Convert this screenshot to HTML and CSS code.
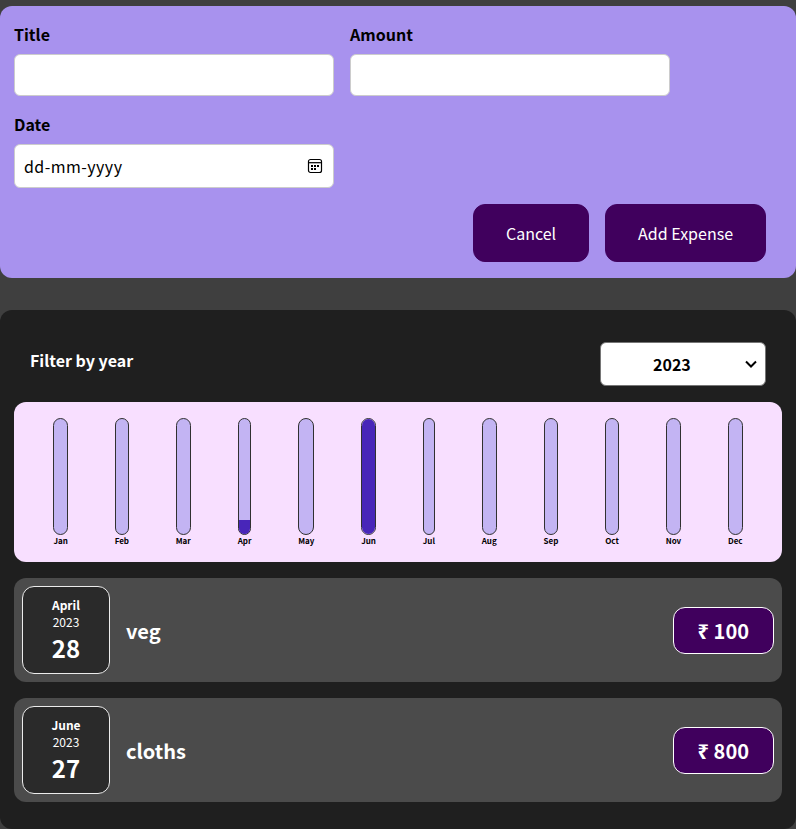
FILE: index.html
```html
<!DOCTYPE html>
<html lang="en">
<head>
    <meta charset="UTF-8">
    <meta name="viewport" content="width=device-width, initial-scale=1.0">
    <title>Expenses</title>
    <link rel="stylesheet" href="styles.css">
</head>
<body>
    <div class="new-expense">
        <form>
            <div class="new-expense-controls">
                <div class="new-expense-control">
                    <label for="title">Title</label>
                    <input id="title" class="text-input" type="text">
                </div>
                <div class="new-expense-control">
                    <label for="amount">Amount</label>
                    <input id="amount" class="text-input" type="text">
                </div>
                <div class="new-expense-control">
                    <label for="date">Date</label>
                    <div class="date-input">
                        <input id="date" type="text" placeholder="dd-mm-yyyy">
                        <svg class="date-icon" width="16" height="16" viewBox="0 0 16 16" aria-hidden="true">
                            <rect x="1.5" y="1.5" width="13" height="13" rx="2" fill="none" stroke="#000" stroke-width="1.2"/>
                            <path d="M1.5 4.7h13" stroke="#000" stroke-width="1.2"/>
                            <path d="M4 7h2v2H4zM7 7h2v2H7zM10 7h2v2h-2zM4 10h2v2H4zM7 10h2v2H7z" fill="#000"/>
                        </svg>
                    </div>
                </div>
            </div>
            <div class="new-expense-actions">
                <button type="button">Cancel</button>
                <button type="submit">Add Expense</button>
            </div>
        </form>
    </div>

    <div class="expenses">
        <div class="expenses-filter">
            <label for="year">Filter by year</label>
            <select id="year">
                <option>2023</option>
            </select>
        </div>

        <div class="chart">
            <div class="chart-bar"><div class="chart-bar-inner"></div><div class="chart-bar-label">Jan</div></div>
            <div class="chart-bar"><div class="chart-bar-inner"></div><div class="chart-bar-label">Feb</div></div>
            <div class="chart-bar"><div class="chart-bar-inner"></div><div class="chart-bar-label">Mar</div></div>
            <div class="chart-bar"><div class="chart-bar-inner"><div class="chart-bar-fill" style="height: 12.5%"></div></div><div class="chart-bar-label">Apr</div></div>
            <div class="chart-bar"><div class="chart-bar-inner"></div><div class="chart-bar-label">May</div></div>
            <div class="chart-bar"><div class="chart-bar-inner"><div class="chart-bar-fill" style="height: 100%"></div></div><div class="chart-bar-label">Jun</div></div>
            <div class="chart-bar"><div class="chart-bar-inner"></div><div class="chart-bar-label">Jul</div></div>
            <div class="chart-bar"><div class="chart-bar-inner"></div><div class="chart-bar-label">Aug</div></div>
            <div class="chart-bar"><div class="chart-bar-inner"></div><div class="chart-bar-label">Sep</div></div>
            <div class="chart-bar"><div class="chart-bar-inner"></div><div class="chart-bar-label">Oct</div></div>
            <div class="chart-bar"><div class="chart-bar-inner"></div><div class="chart-bar-label">Nov</div></div>
            <div class="chart-bar"><div class="chart-bar-inner"></div><div class="chart-bar-label">Dec</div></div>
        </div>

        <div class="expense-item">
            <div class="expense-date">
                <div class="expense-month">April</div>
                <div class="expense-year">2023</div>
                <div class="expense-day">28</div>
            </div>
            <h2 class="expense-title">veg</h2>
            <div class="expense-price">₹ 100</div>
        </div>

        <div class="expense-item">
            <div class="expense-date">
                <div class="expense-month">June</div>
                <div class="expense-year">2023</div>
                <div class="expense-day">27</div>
            </div>
            <h2 class="expense-title">cloths</h2>
            <div class="expense-price">₹ 800</div>
        </div>
    </div>
</body>
</html>
```

FILE: styles.css
```css
* {
    box-sizing: border-box;
}

html {
    font-family: "Noto Sans CJK JP", "Noto Sans", sans-serif;
}

body {
    display: flex;
    flex-direction: column;
    margin: 0;
    padding-top: 6px;
    height: 100vh;
    background-color: #3f3f3f;
}

.new-expense {
    background-color: #a892ee;
    padding: 16px 14px;
    border-radius: 12px;
    margin-bottom: 32px;
}

.new-expense-controls {
    display: flex;
    flex-wrap: wrap;
    gap: 16px;
    margin-bottom: 16px;
}

.new-expense-control label {
    display: block;
    font-weight: bold;
    margin-bottom: 8px;
}

.text-input {
    display: block;
    font: inherit;
    width: 320px;
    height: 42px;
    padding: 8px;
    border: 1px solid #ccc;
    border-radius: 6px;
}

.date-input {
    display: flex;
    align-items: center;
    width: 320px;
    height: 44px;
    padding: 0 10px 0 9px;
    background: #fff;
    border: 1px solid #ccc;
    border-radius: 6px;
}

.date-input input {
    flex: 1;
    min-width: 0;
    font: inherit;
    letter-spacing: 0.45px;
    padding: 0;
    border: none;
    outline: none;
}

.date-input input::placeholder {
    color: #000;
    opacity: 1;
}

.date-icon {
    flex-shrink: 0;
}

.new-expense-actions {
    display: flex;
    justify-content: flex-end;
    gap: 16px;
    padding-right: 16px;
}

.new-expense-actions button {
    font: inherit;
    padding: 16px 32px;
    border: 1px solid #40005d;
    background-color: #40005d;
    color: #fff;
    border-radius: 12px;
    cursor: pointer;
}

.expenses {
    flex: 1;
    min-height: 0;
    background-color: #1f1f1f;
    padding: 16px 14px 0;
    border-radius: 12px;
}

.expenses-filter {
    display: flex;
    justify-content: space-between;
    align-items: center;
    margin: 16px 0;
    padding: 0 16px;
    color: #fff;
}

.expenses-filter label {
    font-weight: bold;
    margin-bottom: 8px;
}

.expenses-filter select {
    appearance: none;
    font: inherit;
    font-weight: bold;
    width: 166px;
    height: 44px;
    padding: 8px 52px;
    background-color: #fff;
    background-image: url("data:image/svg+xml,%3Csvg xmlns='http://www.w3.org/2000/svg' width='14' height='10' viewBox='0 0 14 10'%3E%3Cpath d='M2 2.5l5 5 5-5' fill='none' stroke='%23000' stroke-width='2'/%3E%3C/svg%3E");
    background-repeat: no-repeat;
    background-position: right 7px center;
    border: 1px solid #767676;
    border-radius: 6px;
}

.chart {
    display: flex;
    justify-content: space-around;
    height: 160px;
    padding: 16px;
    border-radius: 12px;
    background-color: #f8dfff;
}

.chart-bar {
    display: flex;
    flex-direction: column;
    align-items: center;
    height: 100%;
}

.chart-bar-inner {
    flex: 1;
    display: flex;
    flex-direction: column;
    justify-content: flex-end;
    width: 100%;
    border: 1px solid #313131;
    border-radius: 12px;
    background-color: #c3b4f3;
    overflow: hidden;
}

.chart-bar-fill {
    background-color: #4826b9;
}

.chart-bar-label {
    font-weight: bold;
    font-size: 8px;
    text-align: center;
}

.expense-item {
    display: flex;
    align-items: center;
    padding: 8px;
    margin: 16px 0;
    border-radius: 12px;
    background-color: #4b4b4b;
}

.expense-date {
    display: flex;
    flex-direction: column;
    align-items: center;
    justify-content: center;
    width: 88px;
    height: 88px;
    border: 1px solid #ececec;
    border-radius: 12px;
    background-color: #2a2a2a;
    color: #fff;
}

.expense-month {
    font-size: 12px;
    font-weight: bold;
}

.expense-year {
    font-size: 12px;
}

.expense-day {
    font-size: 24px;
    font-weight: bold;
}

.expense-title {
    flex: 1;
    margin: 0 16px;
    font-size: 20px;
    color: #fff;
}

.expense-price {
    padding: 8px 24px;
    font-size: 20px;
    font-weight: bold;
    color: #fff;
    background-color: #40005d;
    border: 1px solid #fff;
    border-radius: 12px;
}
```
